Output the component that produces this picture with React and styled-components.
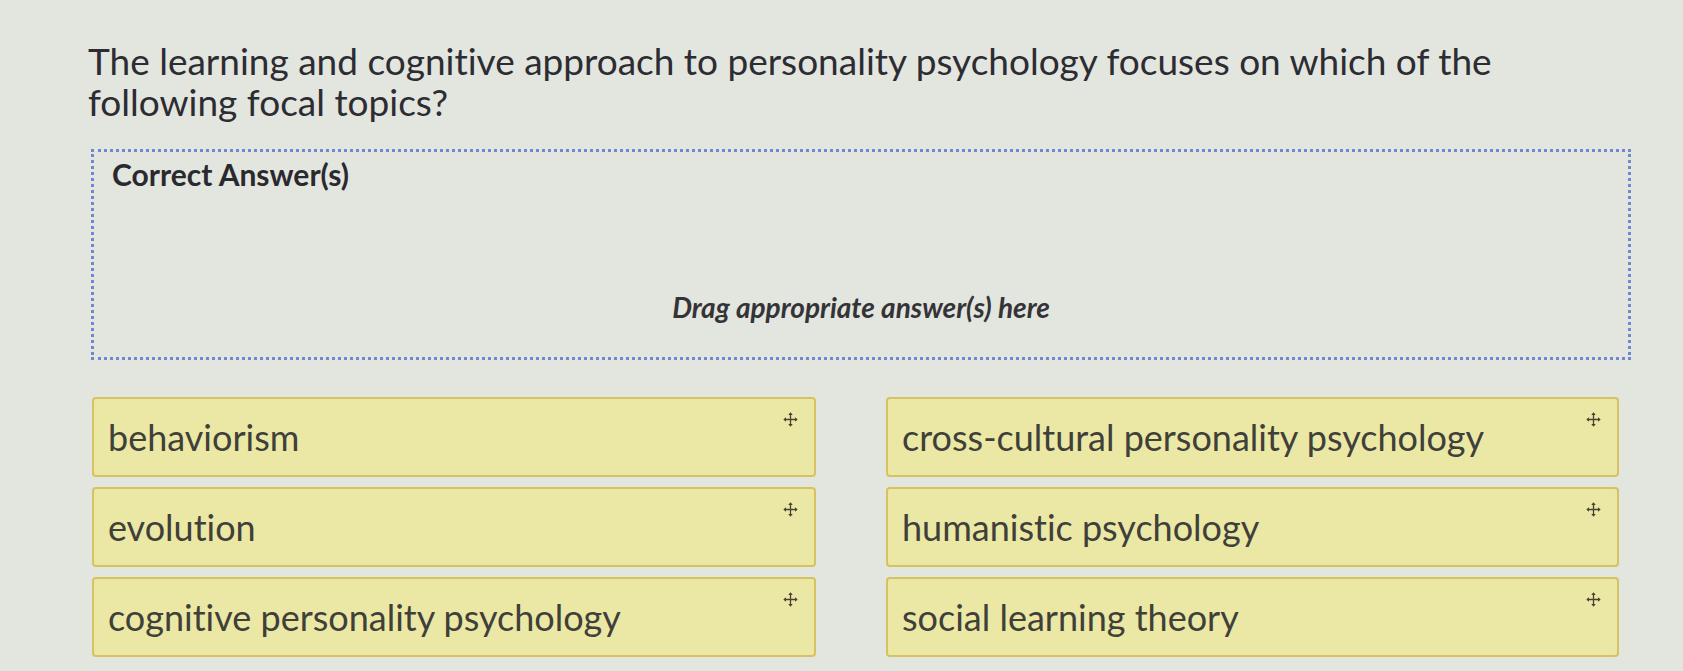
import React from "react";
import styled, { createGlobalStyle } from "styled-components";

const Global = createGlobalStyle`
  html, body {
    margin: 0;
    padding: 0;
    background: #e3e5df;
    overflow: hidden;
  }
  body {
    font-family: "Lato", "Noto Sans", sans-serif;
    font-variant-ligatures: none;
    color: #2e2e33;
  }
`;

const Page = styled.div`
  padding: 40px 52px 0 88px;
  box-sizing: border-box;
  width: 1683px;
  height: 671px;
`;

const Question = styled.h1`
  margin: 0;
  font-size: 37px;
  line-height: 41px;
  font-weight: 400;
  color: #2c2c32;
`;

const DropZone = styled.div`
  margin: 27px 0 0 3px;
  width: 1540px;
  height: 211px;
  box-sizing: border-box;
  border: 3px dotted #7088d2;
  padding: 5px 0 0 18px;
  display: flex;
  flex-direction: column;
`;

const ZoneLabel = styled.div`
  font-size: 30px;
  line-height: 34px;
  font-weight: 700;
  color: #2a2a2e;
`;

const ZoneHint = styled.div`
  margin-top: auto;
  margin-bottom: 33px;
  padding-right: 18px;
  text-align: center;
  font-size: 28px;
  line-height: 34px;
  font-weight: 700;
  font-style: italic;
  color: #343437;
`;

const Options = styled.div`
  margin: 37px 0 0 4px;
  display: grid;
  grid-template-columns: 724px 733px;
  grid-auto-rows: 80px;
  column-gap: 70px;
  row-gap: 10px;
`;

const Option = styled.div`
  display: flex;
  align-items: center;
  box-sizing: border-box;
  padding: 0 16px 0 14px;
  background: #eae8a4;
  border: 2px solid #d7c262;
  border-radius: 4px;
  color: #403f3a;
  font-size: 36px;
  cursor: move;
`;

const OptionText = styled.span`
  flex: 1;
  white-space: nowrap;
`;

const Handle = styled.svg`
  align-self: flex-start;
  margin-top: 13px;
  width: 15px;
  height: 15px;
  flex: none;
`;

const MoveIcon = () => (
  <Handle viewBox="0 0 14 14">
    <path d="M7 1.5v11M1.5 7h11" stroke="#474332" strokeWidth="1.2" />
    <path d="M7 0.3l-2.1 2.5h4.2zM7 13.7l-2.1-2.5h4.2zM0.3 7l2.5-2.1v4.2zM13.7 7l-2.5-2.1v4.2z" fill="#474332" />
  </Handle>
);

const answers = [
  "behaviorism",
  "cross-cultural personality psychology",
  "evolution",
  "humanistic psychology",
  "cognitive personality psychology",
  "social learning theory",
];

export default function App() {
  return (
    <>
      <Global />
      <Page>
        <Question>
          The learning and cognitive approach to personality psychology focuses on which of the
          <br />
          following focal topics?
        </Question>
        <DropZone>
          <ZoneLabel>Correct Answer(s)</ZoneLabel>
          <ZoneHint>Drag appropriate answer(s) here</ZoneHint>
        </DropZone>
        <Options>
          {answers.map((a) => (
            <Option key={a}>
              <OptionText>{a}</OptionText>
              <MoveIcon />
            </Option>
          ))}
        </Options>
      </Page>
    </>
  );
}
